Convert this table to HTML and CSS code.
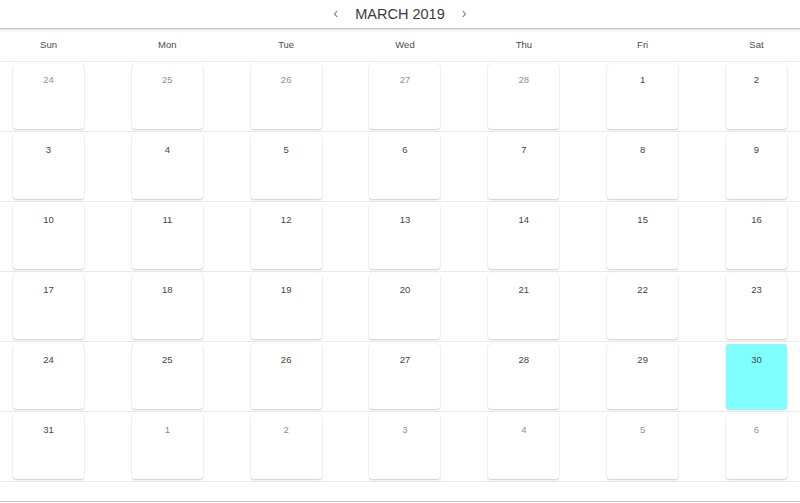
FILE: index.html
```html
<!DOCTYPE html>
<html>
<head>
<meta charset="utf-8">
<link rel="stylesheet" href="styles.css">
</head>
<body>
<div class="calendar">
  <header class="top">
    <button class="nav" aria-label="Previous month"><svg width="8" height="10" viewBox="0 0 8 10"><polyline points="5.2,2 2.6,5 5.2,8" fill="none" stroke="#777" stroke-width="1.1"/></svg></button>
    <h1 class="title">MARCH 2019</h1>
    <button class="nav" aria-label="Next month"><svg width="8" height="10" viewBox="0 0 8 10"><polyline points="2.8,2 5.4,5 2.8,8" fill="none" stroke="#777" stroke-width="1.1"/></svg></button>
  </header>
  <div class="row weekdays">
    <div class="wd">Sun</div><div class="wd">Mon</div><div class="wd">Tue</div><div class="wd">Wed</div><div class="wd">Thu</div><div class="wd">Fri</div><div class="wd">Sat</div>
  </div>
  <div class="row week">
    <div class="cell"><div class="card muted">24</div></div>
    <div class="cell"><div class="card muted">25</div></div>
    <div class="cell"><div class="card muted">26</div></div>
    <div class="cell"><div class="card muted">27</div></div>
    <div class="cell"><div class="card muted">28</div></div>
    <div class="cell"><div class="card">1</div></div>
    <div class="cell"><div class="card">2</div></div>
  </div>
  <div class="row week">
    <div class="cell"><div class="card">3</div></div>
    <div class="cell"><div class="card">4</div></div>
    <div class="cell"><div class="card">5</div></div>
    <div class="cell"><div class="card">6</div></div>
    <div class="cell"><div class="card">7</div></div>
    <div class="cell"><div class="card">8</div></div>
    <div class="cell"><div class="card">9</div></div>
  </div>
  <div class="row week">
    <div class="cell"><div class="card">10</div></div>
    <div class="cell"><div class="card">11</div></div>
    <div class="cell"><div class="card">12</div></div>
    <div class="cell"><div class="card">13</div></div>
    <div class="cell"><div class="card">14</div></div>
    <div class="cell"><div class="card">15</div></div>
    <div class="cell"><div class="card">16</div></div>
  </div>
  <div class="row week">
    <div class="cell"><div class="card">17</div></div>
    <div class="cell"><div class="card">18</div></div>
    <div class="cell"><div class="card">19</div></div>
    <div class="cell"><div class="card">20</div></div>
    <div class="cell"><div class="card">21</div></div>
    <div class="cell"><div class="card">22</div></div>
    <div class="cell"><div class="card">23</div></div>
  </div>
  <div class="row week">
    <div class="cell"><div class="card">24</div></div>
    <div class="cell"><div class="card">25</div></div>
    <div class="cell"><div class="card">26</div></div>
    <div class="cell"><div class="card">27</div></div>
    <div class="cell"><div class="card">28</div></div>
    <div class="cell"><div class="card">29</div></div>
    <div class="cell"><div class="card today">30</div></div>
  </div>
  <div class="row week">
    <div class="cell"><div class="card">31</div></div>
    <div class="cell"><div class="card muted">1</div></div>
    <div class="cell"><div class="card muted">2</div></div>
    <div class="cell"><div class="card muted">3</div></div>
    <div class="cell"><div class="card muted">4</div></div>
    <div class="cell"><div class="card muted">5</div></div>
    <div class="cell"><div class="card muted">6</div></div>
  </div>
  <div class="footer"></div>
</div>
</body>
</html>
```

FILE: styles.css
```css
* { box-sizing: border-box; }
html, body { margin: 0; padding: 0; background: #fff; }
body {
  font-family: "Liberation Sans", Arial, sans-serif;
  color: #333;
  width: 800px;
  height: 503px;
  overflow: hidden;
}
.top {
  height: 29px;
  display: flex;
  align-items: center;
  justify-content: center;
  gap: 12px;
  padding-bottom: 1px;
  border-bottom: 1px solid #c4c4c4;
  box-shadow: 0 1px 2px rgba(0,0,0,0.15);
  position: relative;
  z-index: 1;
}
.title {
  margin: 0;
  font-size: 14.5px;
  font-weight: normal;
  color: #3a3a3a;
  line-height: 20px;
}
.nav {
  border: 0;
  background: none;
  padding: 0;
  width: 10px;
  height: 12px;
  display: flex;
  align-items: center;
  justify-content: center;
  margin: 0 2px;
}
.row {
  display: grid;
  grid-template-columns: repeat(6, 118.83px) 1fr;
  border-bottom: 1px solid #e9e9e9;
}
.weekdays {
  height: 33px;
  align-items: center;
  padding-bottom: 2px;
}
.wd {
  font-size: 9.5px;
  color: #4a4a4a;
  padding-left: 13px;
  width: 84px;
  text-align: center;
}
.wd:last-child { width: auto; padding-right: 13px; }
.week { height: 70px; }
.cell {
  padding: 2px 0 0 13px;
}
.cell:last-child { padding-right: 13px; }
.card {
  width: 71px;
  height: 65px;
  background: #fff;
  border-radius: 3px;
  box-shadow: 0 1px 2px rgba(0,0,0,0.2), 0 0 1px rgba(0,0,0,0.12);
  text-align: center;
  font-size: 9.5px;
  color: #444;
  padding-top: 10px;
  line-height: 11px;
}
.cell:last-child .card { width: auto; }
.card.muted { color: #909090; }
.card.today { background: #80ffff; }
.footer {
  height: 20px;
  border-bottom: 1px solid #c4c4c4;
}
```
